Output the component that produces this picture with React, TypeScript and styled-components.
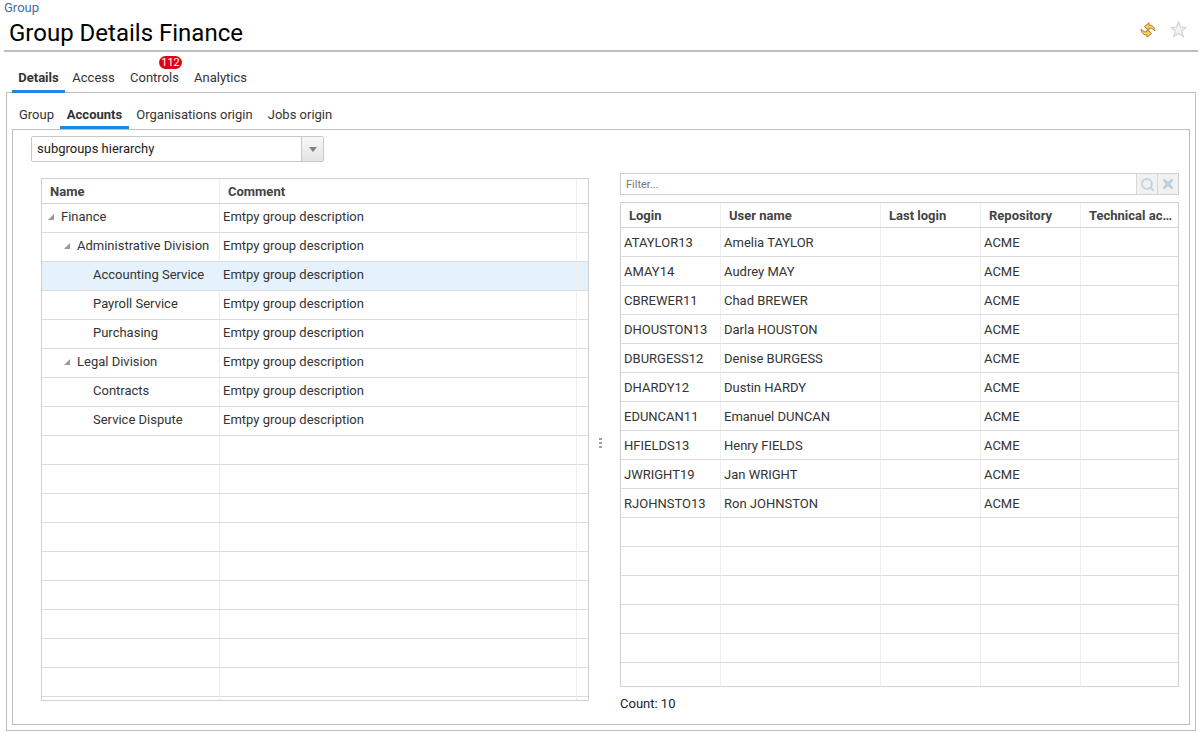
import React from 'react';
import styled, { createGlobalStyle } from 'styled-components';
import { Search, X } from 'lucide-react';

const treeRows = [
  { name: 'Finance', level: 0, open: true },
  { name: 'Administrative Division', level: 1, open: true },
  { name: 'Accounting Service', level: 2, selected: true },
  { name: 'Payroll Service', level: 2 },
  { name: 'Purchasing', level: 2 },
  { name: 'Legal Division', level: 1, open: true },
  { name: 'Contracts', level: 2 },
  { name: 'Service Dispute', level: 2 },
];

const accounts = [
  ['ATAYLOR13', 'Amelia TAYLOR'],
  ['AMAY14', 'Audrey MAY'],
  ['CBREWER11', 'Chad BREWER'],
  ['DHOUSTON13', 'Darla HOUSTON'],
  ['DBURGESS12', 'Denise BURGESS'],
  ['DHARDY12', 'Dustin HARDY'],
  ['EDUNCAN11', 'Emanuel DUNCAN'],
  ['HFIELDS13', 'Henry FIELDS'],
  ['JWRIGHT19', 'Jan WRIGHT'],
  ['RJOHNSTO13', 'Ron JOHNSTON'],
];

const App: React.FC = () => {
  return (
    <Page>
      <GlobalStyle />
      <Crumb>Group</Crumb>
      <Header>
        <Title>Group Details Finance</Title>
        <HeaderIcons>
          <svg width="16" height="16" viewBox="0 0 16 16">
            <path
              d="M4.5 4.5 L9 0.8 V3 C12 3 14.5 4.8 15 8.8 L13 7.2 C12 6.3 10.5 6 9 6.3 V8.5 Z"
              fill="#f8cf6c"
              stroke="#b87a14"
              strokeWidth="1"
            />
            <path
              d="M11.5 11.5 L7 15.2 V13 C4 13 1.5 11.2 1 7.2 L3 8.8 C4 9.7 5.5 10 7 9.7 V7.5 Z"
              fill="#f8cf6c"
              stroke="#b87a14"
              strokeWidth="1"
            />
          </svg>
          <svg width="17" height="17" viewBox="0 0 17 17">
            <path
              d="M8.5 1 L10.6 6.2 L16 6.5 L11.8 10 L13.2 15.5 L8.5 12.5 L3.8 15.5 L5.2 10 L1 6.5 L6.4 6.2 Z"
              fill="#f3f3f3"
              stroke="#d4d4d4"
              strokeWidth="1.2"
            />
          </svg>
        </HeaderIcons>
      </Header>

      <MainTabs>
        <Tab $active $left={12} $width={53}>Details</Tab>
        <Tab $left={0} $width={57}>Access</Tab>
        <Tab $left={1} $width={63}>
          Controls
          <Badge>112</Badge>
        </Tab>
        <Tab $left={1} $width={67}>Analytics</Tab>
      </MainTabs>

      <OuterPanel>
        <SubTabs>
          <Tab $left={0} $width={47}>Group</Tab>
          <Tab $active $left={0} $width={69}>Accounts</Tab>
          <Tab $left={0} $width={131}>Organisations origin</Tab>
          <Tab $left={1} $width={78}>Jobs origin</Tab>
        </SubTabs>
        <InnerPanel>
          <SelectBox>
            <SelectValue>subgroups hierarchy</SelectValue>
            <SelectArrow>
              <svg width="8" height="5" viewBox="0 0 8 5">
                <path d="M0 0 H8 L4 5 Z" fill="#7b8585" />
              </svg>
            </SelectArrow>
          </SelectBox>

          <Split>
            <LeftPane>
              <TreeGrid>
                <Table>
                  <colgroup>
                    <col width="178" />
                    <col width="357" />
                    <col width="13" />
                  </colgroup>
                  <thead>
                    <tr>
                      <HeadCell>Name</HeadCell>
                      <HeadCell>Comment</HeadCell>
                      <HeadCell />
                    </tr>
                  </thead>
                  <tbody>
                    {treeRows.map((row) => (
                      <Row key={row.name} $selected={row.selected}>
                        <TreeCell>
                          <TreeLabel $level={row.level}>
                            {row.open && (
                              <Expander $level={row.level} width="6" height="6" viewBox="0 0 6 6">
                                <path d="M6 0 V6 H0 Z" fill="#9a9a9a" />
                              </Expander>
                            )}
                            {row.name}
                          </TreeLabel>
                        </TreeCell>
                        <TreeCell>Emtpy group description</TreeCell>
                        <TreeCell />
                      </Row>
                    ))}
                    {Array.from({ length: 10 }).map((_, i) => (
                      <Row key={i}>
                        <TreeCell />
                        <TreeCell />
                        <TreeCell />
                      </Row>
                    ))}
                  </tbody>
                </Table>
              </TreeGrid>
            </LeftPane>

            <Splitter>
              <Dots />
            </Splitter>

            <RightPane>
              <FilterBar>
                <FilterInput placeholder="Filter..." />
                <FilterButton>
                  <Search size={15} strokeWidth={3.2} color="#c8d2da" />
                </FilterButton>
                <FilterButton>
                  <X size={14} strokeWidth={5} color="#c3cdd5" />
                </FilterButton>
              </FilterBar>
              <AccountGrid>
                <Table>
                  <colgroup>
                    <col width="100" />
                    <col width="160" />
                    <col width="100" />
                    <col width="100" />
                    <col width="97" />
                  </colgroup>
                  <thead>
                    <tr>
                      <HeadCell>Login</HeadCell>
                      <HeadCell>User name</HeadCell>
                      <HeadCell>Last login</HeadCell>
                      <HeadCell>Repository</HeadCell>
                      <HeadCell>Technical account</HeadCell>
                    </tr>
                  </thead>
                  <tbody>
                    {accounts.map(([login, user]) => (
                      <Row key={login}>
                        <AccountCell>{login}</AccountCell>
                        <AccountCell>{user}</AccountCell>
                        <AccountCell />
                        <AccountCell>ACME</AccountCell>
                        <AccountCell />
                      </Row>
                    ))}
                    {Array.from({ length: 6 }).map((_, i) => (
                      <Row key={i}>
                        <AccountCell />
                        <AccountCell />
                        <AccountCell />
                        <AccountCell />
                        <AccountCell />
                      </Row>
                    ))}
                  </tbody>
                </Table>
              </AccountGrid>
              <Count>Count: 10</Count>
            </RightPane>
          </Split>
        </InnerPanel>
      </OuterPanel>
    </Page>
  );
};

const GlobalStyle = createGlobalStyle`
  html, body {
    margin: 0;
    padding: 0;
    background: #fff;
    overflow: hidden;
  }
  * {
    box-sizing: border-box;
  }
`;

const Page = styled.div`
  width: 1201px;
  height: 732px;
  font-family: Roboto, 'Liberation Sans', sans-serif;
  font-size: 13px;
  color: #333;
`;

const Crumb = styled.div`
  height: 15px;
  padding-left: 4px;
  font-size: 13px;
  line-height: 15px;
  color: #3c6ea5;
`;

const Header = styled.div`
  display: flex;
  align-items: flex-start;
  justify-content: space-between;
  height: 37px;
  margin: 0 3px 0 4px;
  padding-left: 5px;
  border-bottom: 2px solid #bdbdbd;
`;

const Title = styled.h1`
  margin: 0;
  font-size: 24px;
  font-weight: 400;
  line-height: 36px;
  color: #000;
`;

const HeaderIcons = styled.div`
  display: flex;
  align-items: center;
  gap: 14px;
  padding: 6px 11px 0 0;
`;

const MainTabs = styled.div`
  display: flex;
  height: 41px;
  padding-top: 18px;
`;

const SubTabs = styled.div`
  display: flex;
  height: 36px;
  padding: 14px 0 0 6px;
`;

const Tab = styled.div<{ $active?: boolean; $left: number; $width: number }>`
  position: relative;
  width: ${(p) => p.$width}px;
  margin-left: ${(p) => p.$left}px;
  height: 100%;
  text-align: center;
  line-height: 15px;
  white-space: nowrap;
  font-weight: ${(p) => (p.$active ? 700 : 400)};
  border-bottom: 3px solid ${(p) => (p.$active ? '#1e88e5' : 'transparent')};
`;

const Badge = styled.span`
  position: absolute;
  top: -14px;
  left: 36px;
  width: 23px;
  height: 13px;
  border-radius: 7px;
  background: #e0000f;
  color: #fff;
  font-size: 11px;
  font-weight: 400;
  line-height: 13px;
  text-align: center;
`;

const OuterPanel = styled.div`
  height: 639px;
  margin: -1px 5px 0 6px;
  border: 1px solid #bdbdbd;
`;

const InnerPanel = styled.div`
  height: 596px;
  margin: 0 5px;
  padding: 6px 0 0 18px;
  border: 1px solid #bdbdbd;
`;

const SelectBox = styled.div`
  display: flex;
  width: 293px;
  height: 26px;
  border: 1px solid #c8c8c8;
  border-radius: 2px;
`;

const SelectValue = styled.div`
  flex: 1;
  padding-left: 5px;
  line-height: 24px;
  color: #222;
`;

const SelectArrow = styled.div`
  display: flex;
  align-items: center;
  justify-content: center;
  width: 22px;
  border-left: 1px solid #c8c8c8;
  background: linear-gradient(#f8f8f8, #e4e4e4);
`;

const Split = styled.div`
  display: flex;
  margin: 11px 0 0 10px;
`;

const LeftPane = styled.div`
  width: 548px;
  padding-top: 5px;
`;

const TreeGrid = styled.div`
  height: 523px;
  overflow: hidden;
  border: 1px solid #d0d0d0;
`;

const AccountGrid = styled.div`
  height: 485px;
  margin-top: 7px;
  overflow: hidden;
  border: 1px solid #d0d0d0;
`;

const Table = styled.table`
  width: 100%;
  border-collapse: separate;
  border-spacing: 0;
  table-layout: fixed;
`;

const HeadCell = styled.th`
  height: 25px;
  padding: 0 4px 0 8px;
  overflow: hidden;
  font-size: 13px;
  font-weight: 700;
  color: #444;
  text-align: left;
  text-overflow: ellipsis;
  white-space: nowrap;
  border-bottom: 1px solid #d5d5d5;
  border-right: 1px solid #eeeeee;
  &:last-child {
    border-right: none;
  }
`;

const Row = styled.tr<{ $selected?: boolean }>`
  height: 29px;
  background: ${(p) => (p.$selected ? '#e5f1fb' : '#fff')};
`;

const Cell = styled.td`
  height: 29px;
  padding-left: 3px;
  padding-right: 3px;
  overflow: hidden;
  white-space: nowrap;
  border-bottom: 1px solid #dcdcdc;
  border-right: 1px solid #eeeeee;
  &:last-child {
    border-right: none;
  }
`;

const TreeCell = styled(Cell)`
  padding-bottom: 4px;
`;

const AccountCell = styled(Cell)`
  padding-bottom: 0;
`;

const TreeLabel = styled.div<{ $level: number }>`
  position: relative;
  padding-left: ${(p) => 16 + p.$level * 16}px;
`;

const Expander = styled.svg<{ $level: number }>`
  position: absolute;
  left: ${(p) => 3 + p.$level * 16}px;
  top: 5px;
`;

const Splitter = styled.div`
  display: flex;
  align-items: center;
  justify-content: center;
  width: 31px;
  height: 530px;
  padding-right: 8px;
`;

const Dots = styled.div`
  width: 3px;
  height: 11px;
  margin-top: 10px;
  background: linear-gradient(#a0a0a0 2px, transparent 2px) 0 0 / 3px 4px repeat-y;
`;

const RightPane = styled.div`
  width: 559px;
`;

const FilterBar = styled.div`
  display: flex;
  height: 22px;
  border: 1px solid #d0d0d0;
`;

const FilterInput = styled.input`
  flex: 1;
  min-width: 0;
  height: 100%;
  padding: 0 5px;
  border: none;
  outline: none;
  font-family: inherit;
  font-size: 11px;
  &::placeholder {
    color: #777;
    opacity: 1;
  }
`;

const FilterButton = styled.div`
  display: flex;
  align-items: center;
  justify-content: center;
  width: 21px;
  background: #f1f1f1;
  border-left: 1px solid #d8d8d8;
`;

const Count = styled.div`
  margin-top: 9px;
  font-size: 13px;
  line-height: 15px;
  color: #222;
`;

export default App;
